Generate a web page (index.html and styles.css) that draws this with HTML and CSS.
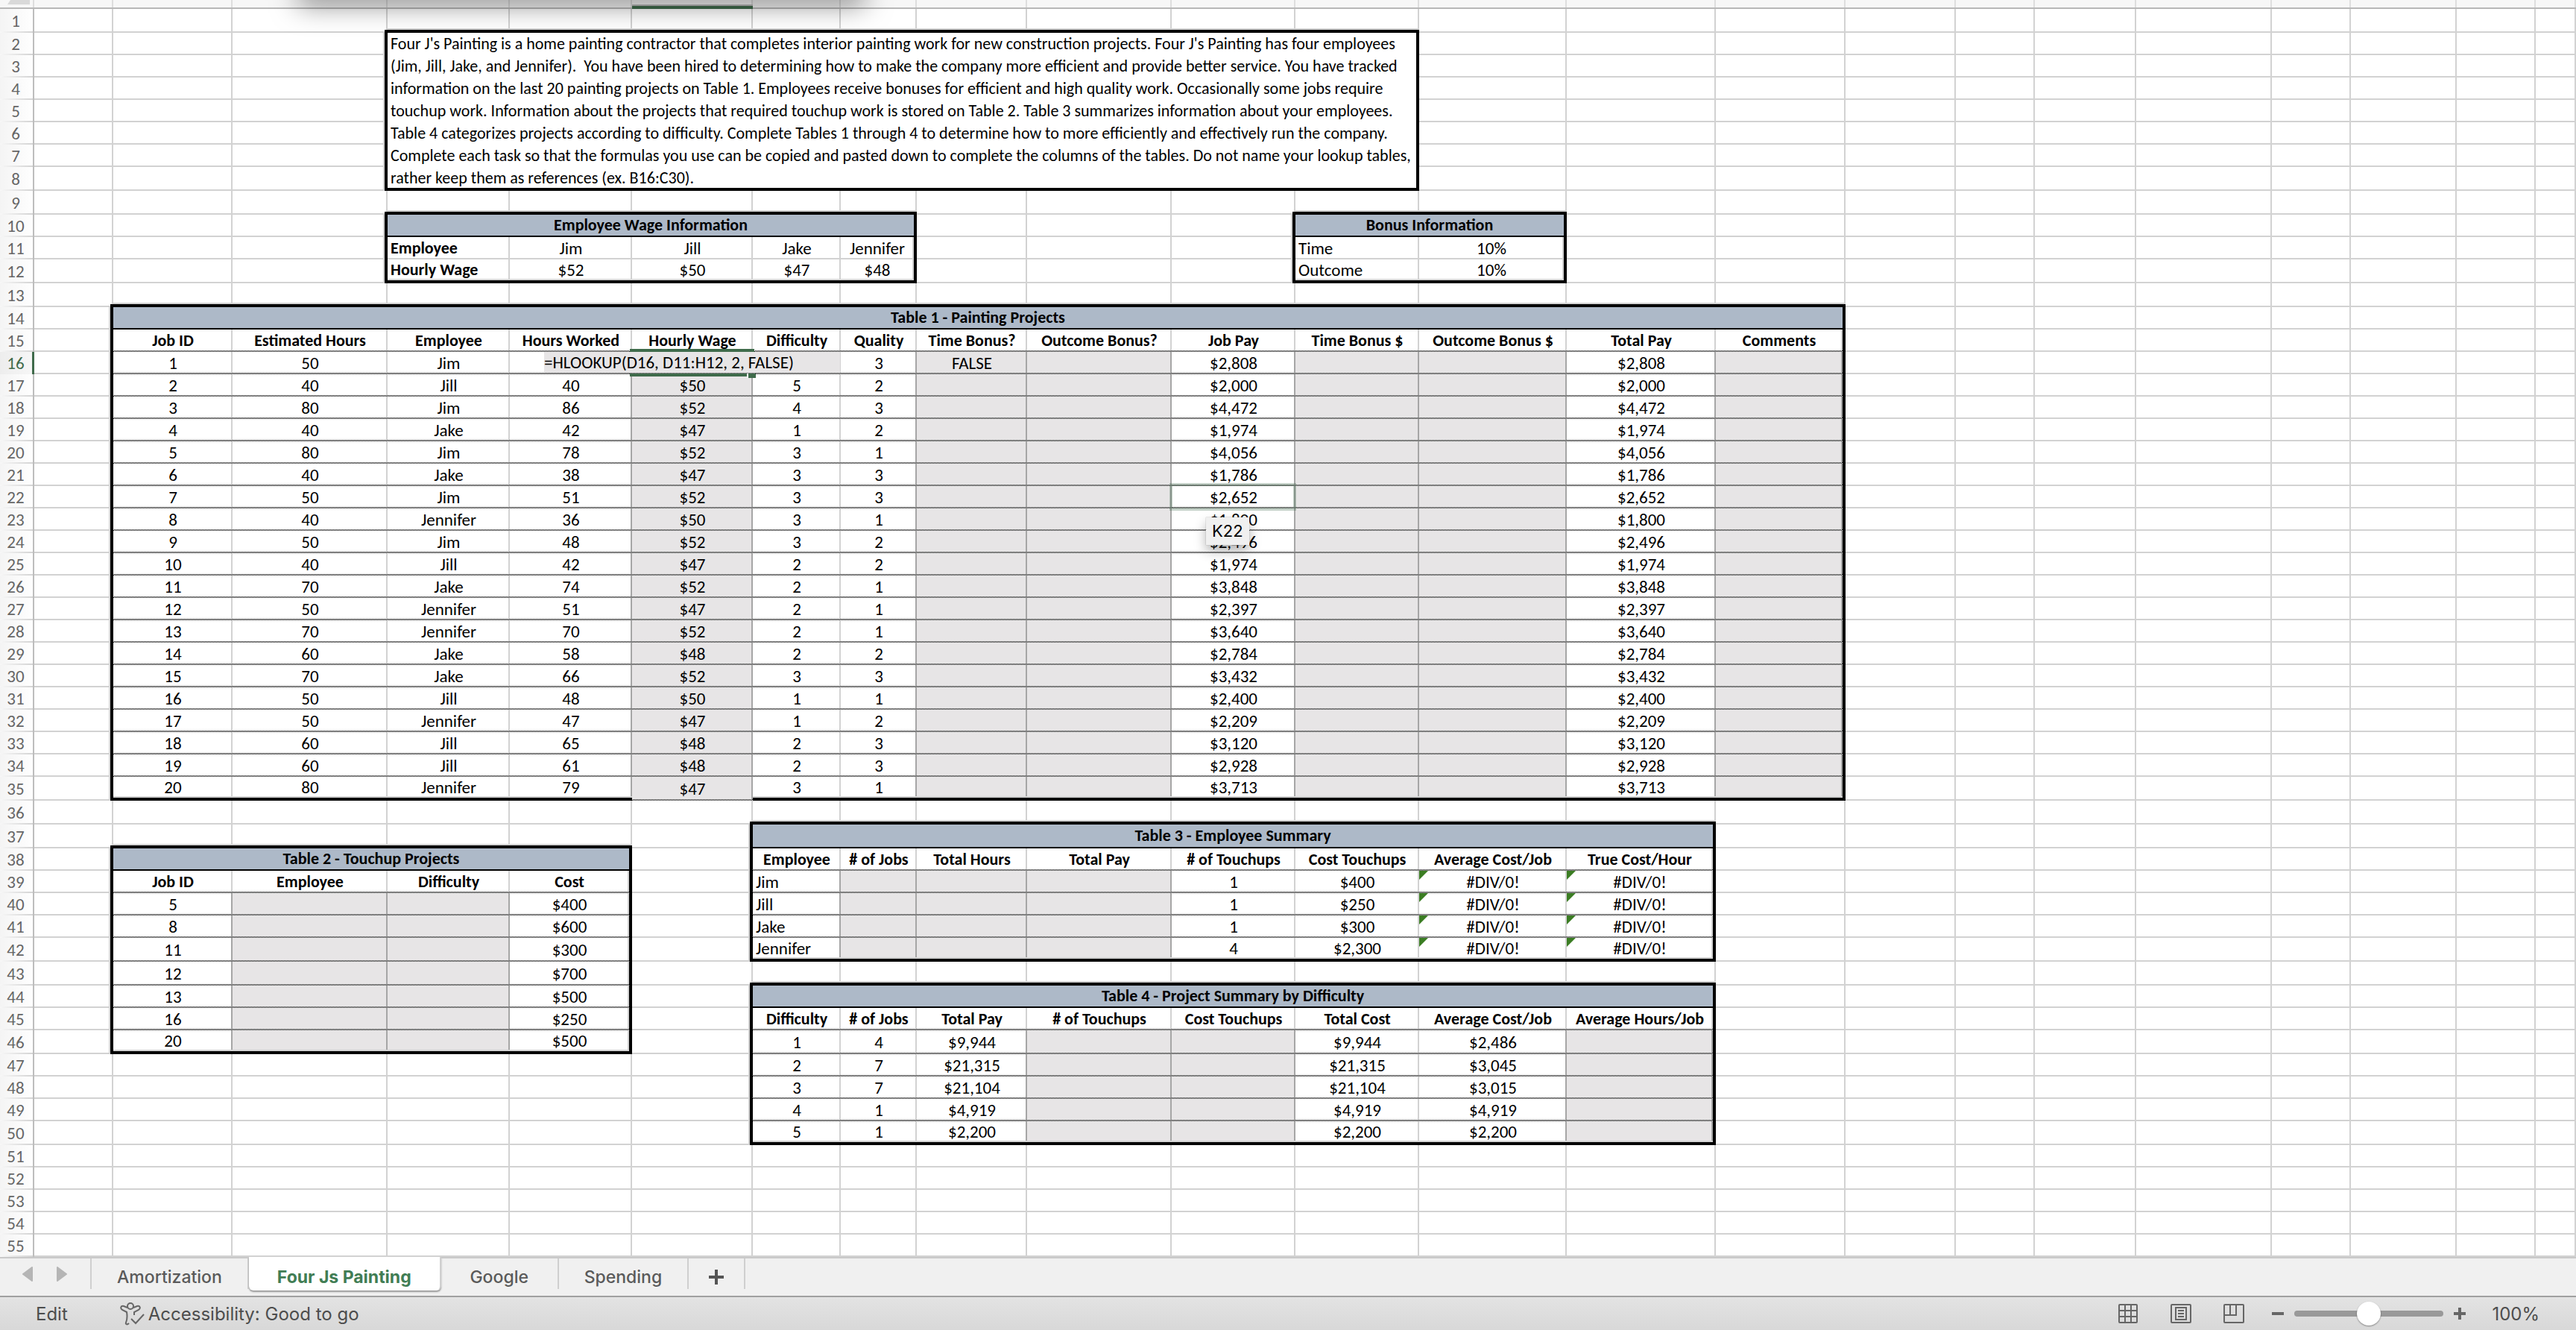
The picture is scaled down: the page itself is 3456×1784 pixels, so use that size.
FILE: index.html
```html
<!DOCTYPE html>
<html lang="en">
<head>
    <meta charset="UTF-8">
    <meta name="viewport" content="width=device-width, initial-scale=1.0">
    <title>Four Js Painting</title>
    <link rel="stylesheet" href="styles.css">
</head>
<body>
    <main class="sheet">
        <table class="grid" id="grid" aria-label="Four Js Painting"></table>
    </main>

    <!-- Sheet tabs -->
    <nav class="tabs">
        <div class="tab-arrows">
            <button type="button" aria-label="Previous sheet">
                <svg width="14" height="20" viewBox="0 0 14 20"><path d="M13 1v18L1 10z"/></svg>
            </button>
            <button type="button" aria-label="Next sheet">
                <svg width="14" height="20" viewBox="0 0 14 20"><path d="M1 1v18l12-9z"/></svg>
            </button>
        </div>
        <button type="button" class="tab">Amortization</button>
        <button type="button" class="tab active">Four Js Painting</button>
        <button type="button" class="tab">Google</button>
        <button type="button" class="tab">Spending</button>
        <button type="button" class="tab add" aria-label="Add sheet">
            <svg width="20" height="20" viewBox="0 0 20 20"><path d="M10 0v20M0 10h20"/></svg>
        </button>
    </nav>

    <!-- Status bar -->
    <footer class="status">
        <span class="mode">Edit</span>
        <button type="button" class="access">
            <svg width="34" height="32" viewBox="0 0 34 32">
                <circle cx="14" cy="6" r="4"/>
                <path d="M10 8L5 6C1 5 0 9 3 11l6 3c1 6 1 9-1 14-1 3 2 3 4 1M18 8l5-2c4-1 5 3 2 5l-6 3v4M15 23l6 6 11-12"/>
            </svg>
            Accessibility: Good to go
        </button>
        <div class="views">
            <button type="button" aria-label="Normal view">
                <svg width="28" height="28" viewBox="0 0 28 28"><rect x="2" y="2" width="24" height="24" rx="1"/><path d="M10 2v24M18 2v24M2 10h24M2 18h24"/></svg>
            </button>
            <button type="button" aria-label="Page layout view">
                <svg width="28" height="28" viewBox="0 0 28 28"><rect x="1" y="2" width="26" height="24" rx="1"/><path d="M7 6h14v16H7zM10 10h8M10 14h8M10 18h8"/></svg>
            </button>
            <button type="button" aria-label="Page break view">
                <svg width="28" height="28" viewBox="0 0 28 28"><rect x="1" y="2" width="26" height="24" rx="1"/><path d="M9 2v14M17 2v14M1 16h17"/></svg>
            </button>
        </div>
        <div class="zoom">
            <button type="button" aria-label="Zoom out">
                <svg width="16" height="16" viewBox="0 0 16 16"><path d="M0 8h16"/></svg>
            </button>
            <input type="range" min="0" max="200" value="100" aria-label="Zoom">
            <button type="button" aria-label="Zoom in">
                <svg width="16" height="16" viewBox="0 0 16 16"><path d="M0 8h16M8 0v16"/></svg>
            </button>
        </div>
        <button type="button" class="percent">100%</button>
    </footer>

    <script src="script.js"></script>
</body>
</html>
```
FILE: styles.css
```css
* {
    box-sizing: border-box;
}
body {
    margin: 0;
    height: 100vh;
    display: flex;
    flex-direction: column;
    font-family: Inter, "Liberation Sans", sans-serif;
    font-size: 24px;
    color: #4d4d4d;
}
button {
    margin: 0;
    padding: 0;
    border: none;
    background: none;
    font: inherit;
    color: inherit;
    display: flex;
    align-items: center;
}
svg {
    display: block;
    fill: none;
    stroke: #666;
    stroke-width: 2;
}

/* Sheet */
.sheet {
    position: relative;
    flex: 1;
    min-height: 0;
    overflow: hidden;
    background: #fff;
}
.sheet::before {
    content: "";
    position: absolute;
    top: -28px;
    left: 400px;
    width: 760px;
    height: 28px;
    box-shadow: 0 6px 36px rgba(0, 0, 0, 0.5);
    z-index: 2;
}
.grid {
    width: 100%;
    table-layout: fixed;
    border-spacing: 0;
    font-family: Calibri, Carlito, Lato, sans-serif;
    font-size: 23px;
    line-height: 24px;
    color: #000;
}
.w44 { width: 46px; }
.w102 { width: 102px; }
.w106 { width: 106px; }
.w118 { width: 118px; }
.w136 { width: 136px; }
.w142 { width: 142px; }
.w148 { width: 148px; }
.w160 { width: 160px; }
.w162 { width: 162px; }
.w164 { width: 164px; }
.w166 { width: 166px; }
.w174 { width: 174px; }
.w182 { width: 182px; }
.w194 { width: 194px; }
.w198 { width: 198px; }
.w200 { width: 200px; }
.w208 { width: 208px; }

.grid tr {
    height: 30px;
}
.grid tr.tall {
    height: 32px;
}
.grid tr.letters {
    height: 12px;
}
.letters td {
    height: 12px;
    padding: 0;
    background:
        linear-gradient(#b8b8b8, #b8b8b8) 0 100% / 100% 2px no-repeat,
        linear-gradient(#dedede, #dedede) 100% 0 / 2px 100% no-repeat,
        #f7f7f7;
}
.letters td.current {
    border-bottom: 4px solid #3f6b4b;
}
.letters .corner {
    vertical-align: top;
}
.letters .corner svg {
    margin-left: 10px;
    fill: #d9d9d9;
    stroke: none;
}

/* Gridlines are painted as backgrounds, black lines are borders */
.cell {
    --v: #d2d2d2;
    --fill: transparent;
    padding: 0;
    text-align: center;
    white-space: nowrap;
    background:
        linear-gradient(#d2d2d2, #d2d2d2) 0 100% / 100% 2px no-repeat,
        linear-gradient(var(--v), var(--v)) 100% 0 / 2px 100% no-repeat,
        var(--fill);
}
.cell.hair {
    background:
        repeating-conic-gradient(#000 0 25%, #fff 0 50%) 0 100% / 2px 2px repeat-x,
        linear-gradient(var(--v), var(--v)) 100% 0 / 2px 100% no-repeat,
        var(--fill);
}
.cell.joint {
    background:
        linear-gradient(#000, #000) 100% 100% / 4px 4px no-repeat,
        linear-gradient(#d2d2d2, #d2d2d2) 0 100% / 100% 2px no-repeat,
        linear-gradient(#d2d2d2, #d2d2d2) 100% 0 / 2px 100% no-repeat;
}
.cell.dark {
    --v: #a6a6a6;
}
.cell.fill {
    --fill: #e7e5e6;
}
.cell.left {
    text-align: left;
    padding-left: 4px;
}
.cell.bold {
    font-size: 22px;
    font-weight: bold;
}
.cell.edge-right {
    border-right: 4px solid #000;
}
.cell.edge-bottom {
    border-bottom: 4px solid #000;
}
.cell.title {
    background: #adb9c8;
    border-bottom: 2px solid #000;
    font-size: 22px;
    font-weight: bold;
}
.cell.note {
    background: #fff;
    text-align: left;
    vertical-align: top;
    padding-left: 4px;
    font-size: 22px;
    line-height: 30px;
}
.note p {
    margin: 0 0 -2px;
}
.cell.error {
    position: relative;
}
.cell.error::before {
    content: "";
    position: absolute;
    top: 0;
    left: 0;
    border: 6px solid transparent;
    border-top-color: #3b7d23;
    border-left-color: #3b7d23;
}

.row-number {
    padding: 0 4px 0 0;
    font-weight: normal;
    color: #666;
    background:
        linear-gradient(#bdbdbd, #bdbdbd) 100% 0 / 2px 100% no-repeat,
        linear-gradient(to right, #f7f7f7, #d2d2d2) 0 100% / 100% 2px no-repeat,
        linear-gradient(to right, #f4f4f4, #fff);
}
.row-number.current {
    color: #3f6b4b;
    background:
        linear-gradient(#3f6b4b, #3f6b4b) 100% 0 / 3px 100% no-repeat,
        linear-gradient(to right, #ededed, #f7f7f7);
}

/* Cell being edited */
.editing {
    position: relative;
}
.editor {
    position: absolute;
    top: 0;
    left: -118px;
    width: 397px;
    height: 28px;
    margin: 0;
    padding: 0;
    border: none;
    background: #e7e5e6;
    font: inherit;
    color: #000;
    z-index: 1;
}
.editor-frame {
    position: absolute;
    top: -4px;
    left: -3px;
    right: -2px;
    bottom: -3px;
    border: solid #3f6b4b;
    border-width: 4px 0;
    z-index: 1;
    pointer-events: none;
}
.editor-frame::after {
    content: "";
    position: absolute;
    right: -2px;
    bottom: -6px;
    width: 10px;
    height: 6px;
    background: #3f6b4b;
    box-shadow: -2px 0 0 #fff;
}

/* Hovered cell and its tooltip */
.hovered {
    position: relative;
}
.hover-frame {
    position: absolute;
    inset: -4px -1px -3px -3px;
    border: 4px solid rgba(63, 107, 75, 0.3);
}
.tooltip {
    position: absolute;
    top: 42px;
    left: 46px;
    padding: 0 8px;
    line-height: 37px;
    background: #f0f0f0;
    box-shadow: 0 0 1px #888, 0 8px 16px rgba(0, 0, 0, 0.3);
    font-family: Inter, "Liberation Sans", sans-serif;
    font-size: 22px;
    z-index: 1;
}

/* Tabs */
.tabs {
    display: flex;
    height: 52px;
    border-top: 2px solid #c9c9c9;
    background: #f0f0f0;
    color: #5a5a5a;
    font-size: 23px;
}
.tab-arrows {
    display: flex;
    align-items: center;
    gap: 32px;
    width: 123px;
    padding-left: 30px;
    border-right: 2px solid #cfcfcf;
    margin-bottom: 9px;
}
.tab-arrows svg {
    fill: #b5b5b5;
    stroke: #b5b5b5;
    stroke-linejoin: round;
}
.tab {
    justify-content: center;
    min-width: 158px;
    padding: 8px 34px 0;
    margin-bottom: 9px;
    border-right: 2px solid #cfcfcf;
    font-weight: 500;
}
.tab.active {
    margin: -2px 0 7px;
    padding: 8px 38px 0;
    background: #fff;
    color: #417d54;
    font-weight: 700;
    border-radius: 0 0 6px 6px;
    box-shadow: 0 2px 2px #999;
}
.tab.add {
    min-width: 0;
    padding: 8px 27px 0;
}
.tab.add svg {
    stroke-width: 4;
    stroke: #555;
}

/* Status bar */
.status {
    display: flex;
    align-items: center;
    height: 46px;
    padding: 0 49px 0 48px;
    border-top: 2px solid #a0a0a0;
    background: linear-gradient(#e3e3e3, #d8d8d8);
}
.access {
    margin-left: 70px;
    gap: 4px;
}
.views {
    display: flex;
    gap: 43px;
    margin-left: auto;
}
.zoom {
    display: flex;
    align-items: center;
    gap: 14px;
    margin: 0 35px 0 37px;
}
.zoom svg {
    stroke-width: 4;
}
.zoom input {
    appearance: none;
    width: 200px;
    height: 32px;
    margin: 0;
    background: none;
}
.zoom input::-webkit-slider-runnable-track {
    height: 8px;
    border-radius: 4px;
    background: #999;
}
.zoom input::-webkit-slider-thumb {
    appearance: none;
    width: 32px;
    height: 32px;
    margin-top: -12px;
    border-radius: 50%;
    background: #fff;
    box-shadow: 0 1px 2px rgba(0, 0, 0, 0.4);
}
```
FILE: script.js
```js
const widths = [44, 106, 160, 208, 164, 164, 162, 118, 102, 148, 194, 166, 166, 198, 200, 174,
    148, 106, 136, 182, 106, 142, 106];
const lastRow = 55;
const tallRows = [1, 8, 9, 12, 13, 35, 36, 37, 42, 43, 46, 50];
const letters = 'ABCDEFGHIJKLMNOPQRSTUVW';

const note = '<p>' + [
    "Four J's Painting is a home painting contractor that completes interior painting work for new construction projects. Four J's Painting has four employees",
    '(Jim, Jill, Jake, and Jennifer).&nbsp; You have been hired to determining how to make the company more efficient and provide better service. You have tracked',
    'information on the last 20 painting projects on Table 1. Employees receive bonuses for efficient and high quality work. Occasionally some jobs require',
    'touchup work. Information about the projects that required touchup work is stored on Table 2. Table 3 summarizes information about your employees.',
    'Table 4 categorizes projects according to difficulty. Complete Tables 1 through 4 to determine how to more efficiently and effectively run the company.',
    'Complete each task so that the formulas you use can be copied and pasted down to complete the columns of the tables. Do not name your lookup tables,',
    'rather keep them as references (ex. B16:C30).'
].join('<br>') + '</p>';

// id, estimated, employee, worked, wage, difficulty, quality, job pay
const projects = [
    [1, 50, 'Jim', '', '', '', 3, '$2,808'],
    [2, 40, 'Jill', 40, '$50', 5, 2, '$2,000'],
    [3, 80, 'Jim', 86, '$52', 4, 3, '$4,472'],
    [4, 40, 'Jake', 42, '$47', 1, 2, '$1,974'],
    [5, 80, 'Jim', 78, '$52', 3, 1, '$4,056'],
    [6, 40, 'Jake', 38, '$47', 3, 3, '$1,786'],
    [7, 50, 'Jim', 51, '$52', 3, 3, '$2,652'],
    [8, 40, 'Jennifer', 36, '$50', 3, 1, '$1,800'],
    [9, 50, 'Jim', 48, '$52', 3, 2, '$2,496'],
    [10, 40, 'Jill', 42, '$47', 2, 2, '$1,974'],
    [11, 70, 'Jake', 74, '$52', 2, 1, '$3,848'],
    [12, 50, 'Jennifer', 51, '$47', 2, 1, '$2,397'],
    [13, 70, 'Jennifer', 70, '$52', 2, 1, '$3,640'],
    [14, 60, 'Jake', 58, '$48', 2, 2, '$2,784'],
    [15, 70, 'Jake', 66, '$52', 3, 3, '$3,432'],
    [16, 50, 'Jill', 48, '$50', 1, 1, '$2,400'],
    [17, 50, 'Jennifer', 47, '$47', 1, 2, '$2,209'],
    [18, 60, 'Jill', 65, '$48', 2, 3, '$3,120'],
    [19, 60, 'Jill', 61, '$48', 2, 3, '$2,928'],
    [20, 80, 'Jennifer', 79, '$47', 3, 1, '$3,713']
];

const cells = {};

function cell(col, row) {
    const key = col + ',' + row;
    if (!cells[key]) cells[key] = { text: '', cls: new Set() };
    return cells[key];
}

function put(ref, values, ...classes) {
    const col = letters.indexOf(ref[0]);
    const row = Number(ref.slice(1));
    values.forEach((value, i) => {
        const c = cell(col + i, row);
        c.text = value;
        classes.forEach(name => c.cls.add(name));
    });
}

function each(range, fn) {
    const [a, b] = range.split(':');
    for (let r = Number(a.slice(1)); r <= Number(b.slice(1)); r++) {
        for (let c = letters.indexOf(a[0]); c <= letters.indexOf(b[0]); c++) fn(c, r);
    }
}

function mark(range, name) {
    each(range, (c, r) => cell(c, r).cls.add(name));
}

// Thick black frame, drawn on the outer cells' right and bottom sides
function box(range) {
    const [a, b] = range.split(':');
    const left = letters.indexOf(a[0]), right = letters.indexOf(b[0]);
    const top = Number(a.slice(1)), bottom = Number(b.slice(1));
    cell(left - 1, top - 1).cls.add('joint');
    for (let c = left; c <= right; c++) {
        cell(c, top - 1).cls.add('edge-bottom');
        cell(c, bottom).cls.add('edge-bottom');
    }
    for (let r = top; r <= bottom; r++) {
        cell(left - 1, r).cls.add('edge-right');
        cell(right, r).cls.add('edge-right');
    }
}

function merge(range, text, name) {
    const [a, b] = range.split(':');
    const first = cell(letters.indexOf(a[0]), Number(a.slice(1)));
    each(range, (c, r) => { cell(c, r).skip = true; });
    first.skip = false;
    first.text = text;
    first.colspan = letters.indexOf(b[0]) - letters.indexOf(a[0]) + 1;
    first.rowspan = Number(b.slice(1)) - Number(a.slice(1)) + 1;
    first.cls.add(name);
    first.cls.add('edge-right');
}

// Project description
box('D2:L8');
merge('D2:L8', note, 'note');
cell(3, 2).cls.add('edge-bottom');

// Wages and bonuses
box('D10:H12');
merge('D10:H10', 'Employee Wage Information', 'title');
put('D11', ['Employee'], 'bold', 'left');
put('D12', ['Hourly Wage'], 'bold', 'left');
put('E11', ['Jim', 'Jill', 'Jake', 'Jennifer']);
put('E12', ['$52', '$50', '$47', '$48']);
box('L10:M12');
merge('L10:M10', 'Bonus Information', 'title');
put('L11', ['Time'], 'left');
put('L12', ['Outcome'], 'left');
put('M11', ['10%']);
put('M12', ['10%']);

// Table 1
box('B14:O35');
merge('B14:O14', 'Table 1 - Painting Projects', 'title');
put('B15', ['Job ID', 'Estimated Hours', 'Employee', 'Hours Worked', 'Hourly Wage', 'Difficulty', 'Quality',
    'Time Bonus?', 'Outcome Bonus?', 'Job Pay', 'Time Bonus $', 'Outcome Bonus $', 'Total Pay', 'Comments'], 'bold');
projects.forEach((p, i) => {
    put('B' + (16 + i), p.slice(0, 7));
    put('K' + (16 + i), [p[7]]);
    put('N' + (16 + i), [p[7]]);
});
put('I16', ['FALSE']);
mark('B15:O34', 'hair');
['F16:F35', 'I16:J35', 'L16:M35', 'O16:O35'].forEach(range => mark(range, 'fill'));
cell(5, 35).cls.delete('edge-bottom');
cell(5, 35).cls.add('hair');

// Table 2
box('B38:E46');
merge('B38:E38', 'Table 2 - Touchup Projects', 'title');
put('B39', ['Job ID', 'Employee', 'Difficulty', 'Cost'], 'bold');
[[5, '$400'], [8, '$600'], [11, '$300'], [12, '$700'], [13, '$500'], [16, '$250'], [20, '$500']].forEach((t, i) => {
    put('B' + (40 + i), [t[0]]);
    put('E' + (40 + i), [t[1]]);
});
mark('B39:E45', 'hair');
mark('C40:D46', 'fill');

// Table 3
box('G37:N42');
merge('G37:N37', 'Table 3 - Employee Summary', 'title');
put('G38', ['Employee', '# of Jobs', 'Total Hours', 'Total Pay', '# of Touchups', 'Cost Touchups',
    'Average Cost/Job', 'True Cost/Hour'], 'bold');
[['Jim', 1, '$400'], ['Jill', 1, '$250'], ['Jake', 1, '$300'], ['Jennifer', 4, '$2,300']].forEach((t, i) => {
    put('G' + (39 + i), [t[0]], 'left');
    put('K' + (39 + i), [t[1], t[2]]);
    put('M' + (39 + i), ['#DIV/0!', '#DIV/0!'], 'error');
});
mark('G38:N41', 'hair');
mark('H39:J42', 'fill');

// Table 4
box('G44:N50');
merge('G44:N44', 'Table 4 - Project Summary by Difficulty', 'title');
put('G45', ['Difficulty', '# of Jobs', 'Total Pay', '# of Touchups', 'Cost Touchups', 'Total Cost',
    'Average Cost/Job', 'Average Hours/Job'], 'bold');
[
    [1, 4, '$9,944', '', '', '$9,944', '$2,486'],
    [2, 7, '$21,315', '', '', '$21,315', '$3,045'],
    [3, 7, '$21,104', '', '', '$21,104', '$3,015'],
    [4, 1, '$4,919', '', '', '$4,919', '$4,919'],
    [5, 1, '$2,200', '', '', '$2,200', '$2,200']
].forEach((t, i) => put('G' + (46 + i), t));
mark('G45:N49', 'hair');
mark('J46:K50', 'fill');
mark('N46:N50', 'fill');

// Cell being edited, and the one under the pointer
put('F16', ['<input class="editor" type="text" value="=HLOOKUP(D16, D11:H12, 2, FALSE)" aria-label="F16"><span class="editor-frame"></span>'], 'editing');
put('K22', ['$2,652<span class="hover-frame"></span><span class="tooltip" role="tooltip">K22</span>'], 'hovered');

// Render
let html = '<colgroup>' + widths.map(w => `<col class="w${w}">`).join('') + '<col></colgroup><tbody>';
html += '<tr class="letters"><td class="corner"><svg width="32" height="6" viewBox="0 0 32 6"><path d="M4 0h26v6H0z"/></svg></td>';
for (let c = 0; c < letters.length; c++) {
    html += `<td${letters[c] === 'F' ? ' class="current"' : ''}></td>`;
}
html += '</tr>';
for (let r = 1; r <= lastRow; r++) {
    html += `<tr${tallRows.includes(r) ? ' class="tall"' : ''}>`;
    html += `<th scope="row" class="row-number${r === 16 ? ' current' : ''}">${r}</th>`;
    for (let c = 0; c < letters.length; c++) {
        const item = cell(c, r);
        if (item.skip) continue;
        if (item.cls.has('fill') || cell(c + 1, r).cls.has('fill')) item.cls.add('dark');
        const span = item.colspan ? ` colspan="${item.colspan}" rowspan="${item.rowspan}"` : '';
        html += `<td class="${['cell', ...item.cls].join(' ')}"${span}>${item.text}</td>`;
    }
    html += '</tr>';
}
document.getElementById('grid').innerHTML = html + '</tbody>';
```
